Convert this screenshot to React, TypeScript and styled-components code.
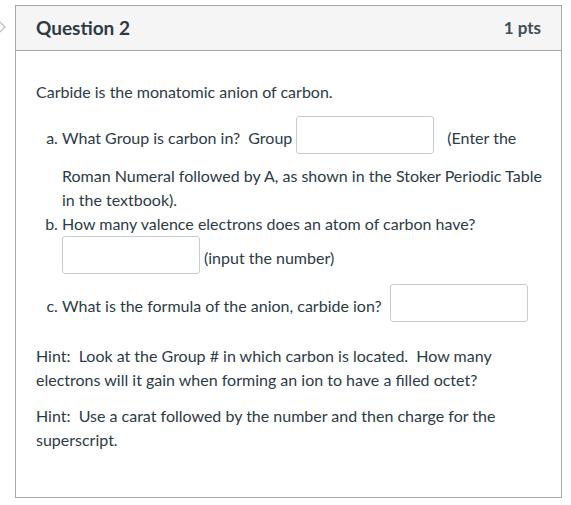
import styled, { createGlobalStyle } from "styled-components";

const GlobalStyle = createGlobalStyle`
  html, body {
    margin: 0;
    padding: 0;
    background: #ffffff;
  }
  body {
    font-family: Lato, "Noto Sans", "Liberation Sans", sans-serif;
    color: #2d3b45;
  }
`;

const Page = styled.div`
  position: relative;
  width: 571px;
  height: 505px;
  padding: 5px 9px 0 15px;
  box-sizing: border-box;
`;

const NavArrow = styled.svg`
  position: absolute;
  left: -3px;
  top: 19px;
`;

const Card = styled.section`
  border: 1px solid #a9a9a9;
  height: 493px;
  box-sizing: border-box;
  display: flex;
  flex-direction: column;
`;

const Header = styled.header`
  display: flex;
  align-items: center;
  justify-content: space-between;
  height: 45px;
  padding: 0 20px 2px;
  box-sizing: border-box;
  background: #f5f5f5;
  border-bottom: 1px solid #a9a9a9;
`;

const Title = styled.h2`
  margin: 0;
  font-size: 19px;
  font-weight: 700;
  color: #2d3b45;
`;

const Points = styled.span`
  font-size: 17px;
  font-weight: 700;
  color: #3f4d57;
`;

const Body = styled.div`
  padding: 17px 12px 16px 20px;
  font-size: 16px;
  line-height: 24px;
`;

const Para = styled.p`
  margin: 12px 0;
`;

const List = styled.ol`
  list-style-type: lower-alpha;
  margin: 12px 0;
  padding-left: 26px;
`;

const Item = styled.li`
  padding-left: 0;
`;

const Blank = styled.input<{ $ml?: number; $mr?: number }>`
  width: 138px;
  height: 38px;
  box-sizing: border-box;
  margin: 0 ${(p) => p.$mr ?? 4}px 10px ${(p) => p.$ml ?? 4}px;
  border: 1px solid #c7cdd1;
  border-radius: 3px;
  background: #fff;
  vertical-align: middle;
  font: inherit;
  padding: 0 8px;
`;

export default function App() {
  return (
    <>
      <GlobalStyle />
      <Page>
        <NavArrow width="10" height="16" viewBox="0 0 10 16">
          <path d="M1 1 L8 8 L1 15" fill="none" stroke="#b4bcc2" strokeWidth="1.2" />
        </NavArrow>
        <Card>
          <Header>
            <Title>Question 2</Title>
            <Points>1 pts</Points>
          </Header>
          <Body>
            <Para>Carbide is the monatomic anion of carbon.</Para>
            <List>
              <Item>
                What Group is carbon in?&nbsp; Group
                <Blank type="text" aria-label="Group" $mr={13} />
                (Enter the Roman Numeral followed by A, as shown in the Stoker Periodic Table in the
                textbook).
              </Item>
              <Item>
                How many valence electrons does an atom of carbon have?
                <br />
                <Blank type="text" aria-label="Valence electrons" $ml={0} />
                (input the number)
              </Item>
              <Item>
                What is the formula of the anion, carbide ion?
                <Blank type="text" aria-label="Formula" $ml={8} />
              </Item>
            </List>
            <Para>
              Hint:&nbsp; Look at the Group # in which carbon is located.&nbsp; How many electrons will
              it gain when forming an ion to have a filled octet?
            </Para>
            <Para>
              Hint:&nbsp; Use a carat followed by the number and then charge for the superscript.
            </Para>
          </Body>
        </Card>
      </Page>
    </>
  );
}
